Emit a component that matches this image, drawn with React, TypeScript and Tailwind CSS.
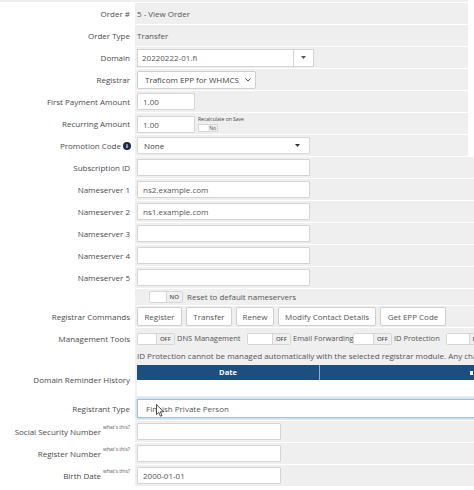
import React from "react";

const F = "font-['Open_Sans',sans-serif]";

function Label({ children }: { children: React.ReactNode }) {
  return (
    <div className="w-[135px] shrink-0 pr-[5px] flex items-center justify-end text-[8px] text-[#4a4a4a] bg-white whitespace-nowrap">
      {children}
    </div>
  );
}

function Input({ w, value, extra }: { w: string; value?: string; extra?: string }) {
  return (
    <div
      className={`${w} h-[17px] bg-white border border-[#d4d4d4] rounded-[1px] flex items-center pl-[5px] text-[8px] text-[#555] ${extra ?? ""}`}
    >
      {value}
    </div>
  );
}

function Toggle({ w, text, h }: { w: string; text: string; h?: string }) {
  return (
    <div className={`${w} ${h ?? "h-[12px]"} flex border border-[#d6d6d6] rounded-[2px] bg-white overflow-hidden shrink-0`}>
      <div className="flex-1 bg-white" />
      <div className="px-[3px] bg-[#efefef] border-l border-[#d6d6d6] flex items-center text-[6px] font-semibold text-[#555] leading-none">
        {text}
      </div>
    </div>
  );
}

function Btn({ w, children }: { w: string; children: React.ReactNode }) {
  return (
    <div
      className={`${w} h-[19px] bg-white border border-[#d0d0d0] rounded-[2px] flex items-center justify-center text-[8px] text-[#555] shrink-0`}
    >
      {children}
    </div>
  );
}

function What() {
  return <span className="text-[5px] relative top-[-4px] ml-[2px] text-[#555]">what's this?</span>;
}

export default function App() {
  return (
    <div className={`${F} w-[474px] h-[490px] overflow-hidden bg-white relative`}>
      <div className="w-[468px]">
        <div className="h-[2px] bg-[#efefef] mb-px" />
        <div className="flex h-[21px] mb-px">
          <Label>Order #</Label>
          <div className="flex-1 bg-[#efefef] flex items-center pl-[2px] text-[8px] text-[#555]">5 - View Order</div>
        </div>
        <div className="flex h-[21px] mb-px">
          <Label>Order Type</Label>
          <div className="flex-1 bg-[#efefef] flex items-center pl-[2px] text-[8px] text-[#555]">Transfer</div>
        </div>
        <div className="flex h-[21px] mb-px">
          <Label>Domain</Label>
          <div className="flex-1 bg-[#efefef] flex items-center pl-[2px]">
            <div className="flex h-[18px] bg-white border border-[#d4d4d4]">
              <div className="w-[155px] flex items-center pl-[4px] text-[8px] text-[#555]">20220222-01.fi</div>
              <div className="w-[20px] border-l border-[#d4d4d4] flex items-center justify-center">
                <svg width="5" height="3" viewBox="0 0 5 3">
                  <path d="M0 0 L5 0 L2.5 3 Z" fill="#555" />
                </svg>
              </div>
            </div>
          </div>
        </div>
        <div className="flex h-[21px] mb-px">
          <Label>Registrar</Label>
          <div className="flex-1 bg-[#efefef] flex items-center pl-[2px]">
            <div className="w-[119px] h-[18px] bg-white border border-[#cfcfcf] rounded-[2px] flex items-center pl-[7px] pr-[4px] text-[8px] text-[#444]">
              <span className="flex-1">Traficom EPP for WHMCS</span>
              <svg width="6" height="4" viewBox="0 0 6 4">
                <path d="M0.5 0.5 L3 3 L5.5 0.5" stroke="#555" strokeWidth="1" fill="none" />
              </svg>
            </div>
          </div>
        </div>
        <div className="flex h-[21px] mb-px">
          <Label>First Payment Amount</Label>
          <div className="flex-1 bg-[#efefef] flex items-center pl-[2px]">
            <Input w="w-[58px]" value="1.00" />
          </div>
        </div>
        <div className="flex h-[21px] mb-px">
          <Label>Recurring Amount</Label>
          <div className="flex-1 bg-[#efefef] flex items-center pl-[2px]">
            <Input w="w-[58px]" value="1.00" extra="mt-[2px]" />
            <div className="ml-[3px] flex flex-col">
              <span className="text-[5px] text-[#444] leading-[7px]">Recalculate on Save</span>
              <div className="w-[20px] h-[8px] flex border border-[#d6d6d6] rounded-[1px] bg-white mt-[1px]">
                <div className="flex-1" />
                <div className="px-[1px] bg-[#efefef] text-[5px] text-[#555] leading-[7px]">No</div>
              </div>
            </div>
          </div>
        </div>
        <div className="flex h-[21px] mb-px">
          <div className="w-[135px] shrink-0 pr-[4px] flex items-center justify-end text-[8px] text-[#4a4a4a] bg-white gap-[2px]">
            Promotion Code
            <span className="w-[8px] h-[8px] rounded-full bg-[#1b2a4a] text-white text-[6px] font-bold flex items-center justify-center leading-none">
              i
            </span>
          </div>
          <div className="flex-1 bg-[#efefef] flex items-center pl-[2px]">
            <div className="w-[173px] h-[17px] bg-white border border-[#d8d8d8] rounded-[1px] flex items-center pl-[6px] pr-[9px] text-[8px] text-[#444]">
              <span className="flex-1">None</span>
              <svg width="5" height="3" viewBox="0 0 5 3">
                <path d="M0 0 L5 0 L2.5 3 Z" fill="#333" />
              </svg>
            </div>
          </div>
        </div>
      </div>

      <div className="w-[520px]">
        {[
          ["Subscription ID", ""],
          ["Nameserver 1", "ns2.example.com"],
          ["Nameserver 2", "ns1.example.com"],
          ["Nameserver 3", ""],
          ["Nameserver 4", ""],
          ["Nameserver 5", ""],
        ].map(([l, v]) => (
          <div key={l} className="flex h-[21px] mb-px">
            <Label>{l}</Label>
            <div className="flex-1 bg-[#efefef] flex items-center pl-[2px]">
              <Input w="w-[173px]" value={v} />
            </div>
          </div>
        ))}

        <div className="flex h-[16px] mb-px">
          <Label>{""}</Label>
          <div className="flex-1 bg-[#efefef] flex items-center pl-[14px] text-[8px] text-[#555]">
            <Toggle w="w-[34px]" text="NO" />
            <span className="ml-[4px]">Reset to default nameservers</span>
          </div>
        </div>

        <div className="flex h-[21px] mb-px">
          <Label>Registrar Commands</Label>
          <div className="flex-1 bg-[#efefef] flex items-center pl-[2px] gap-[4px]">
            <Btn w="w-[45px]">Register</Btn>
            <Btn w="w-[46px]">Transfer</Btn>
            <Btn w="w-[38px]">Renew</Btn>
            <Btn w="w-[98px]">Modify Contact Details</Btn>
            <Btn w="w-[66px]">Get EPP Code</Btn>
          </div>
        </div>

        <div className="flex h-[21px]">
          <Label>Management Tools</Label>
          <div className="flex-1 bg-[#efefef] flex items-center pl-[2px] text-[7.5px] text-[#555] whitespace-nowrap">
            <Toggle w="w-[38px]" text="OFF" />
            <span className="w-[72px] pl-[2px]">DNS Management</span>
            <Toggle w="w-[44px]" text="OFF" />
            <span className="w-[62px] pl-[2px]">Email Forwarding</span>
            <Toggle w="w-[39px]" text="OFF" />
            <span className="w-[54px] pl-[2px]">ID Protection</span>
            <Toggle w="w-[40px]" text="NO" />
          </div>
        </div>
        <div className="flex h-[14px]">
          <Label>{""}</Label>
          <div className="flex-1 bg-[#efefef] flex items-center pl-[2px] text-[8px] text-[#555] whitespace-nowrap overflow-hidden">
            ID Protection cannot be managed automatically with the selected registrar module. Any changes made here will only be recorded
          </div>
        </div>

        <div className="flex h-[34px]">
          <Label>Domain Reminder History</Label>
          <div className="flex-1 bg-[#efefef] flex flex-col pt-[2px] pb-[1px] pl-[2px]">
            <div className="flex h-[15px] bg-[#1c4e80] text-white text-[7.5px] font-bold">
              <div className="w-[183px] flex items-center justify-center border-r border-[#8fb0d0]">Date</div>
              <div className="flex-1 flex items-center pl-[150px]">
                <span className="w-[3px] h-[4px] bg-white" />
              </div>
            </div>
            <div className="flex-1 bg-white" />
          </div>
        </div>

        <div className="flex h-[23px] mb-px">
          <Label>Registrant Type</Label>
          <div className="flex-1 bg-[#efefef] flex items-center pl-[2px]">
            <div className="relative w-full h-[19px] bg-white border border-[#9cc4e6] shadow-[0_0_3px_rgba(102,175,233,0.6)] flex items-center pl-[8px] text-[8px] text-[#555]">
              Finnish Private Person
              <svg className="absolute left-[18px] top-[4px]" width="8" height="13" viewBox="0 0 8 13">
                <path
                  d="M0.5 0.5 L0.5 10.5 L2.8 8.4 L4.4 12.2 L6 11.5 L4.4 7.8 L7.5 7.8 Z"
                  fill="white"
                  stroke="#222"
                  strokeWidth="0.8"
                  strokeLinejoin="round"
                />
              </svg>
            </div>
          </div>
        </div>

        {[
          ["Social Security Number", ""],
          ["Register Number", ""],
          ["Birth Date", "2000-01-01"],
        ].map(([l, v]) => (
          <div key={l} className="flex h-[21px] mb-px">
            <Label>
              {l}
              <What />
            </Label>
            <div className="flex-1 bg-[#efefef] flex items-center pl-[2px]">
              <Input w="w-[144px]" value={v} />
            </div>
          </div>
        ))}
      </div>
    </div>
  );
}
